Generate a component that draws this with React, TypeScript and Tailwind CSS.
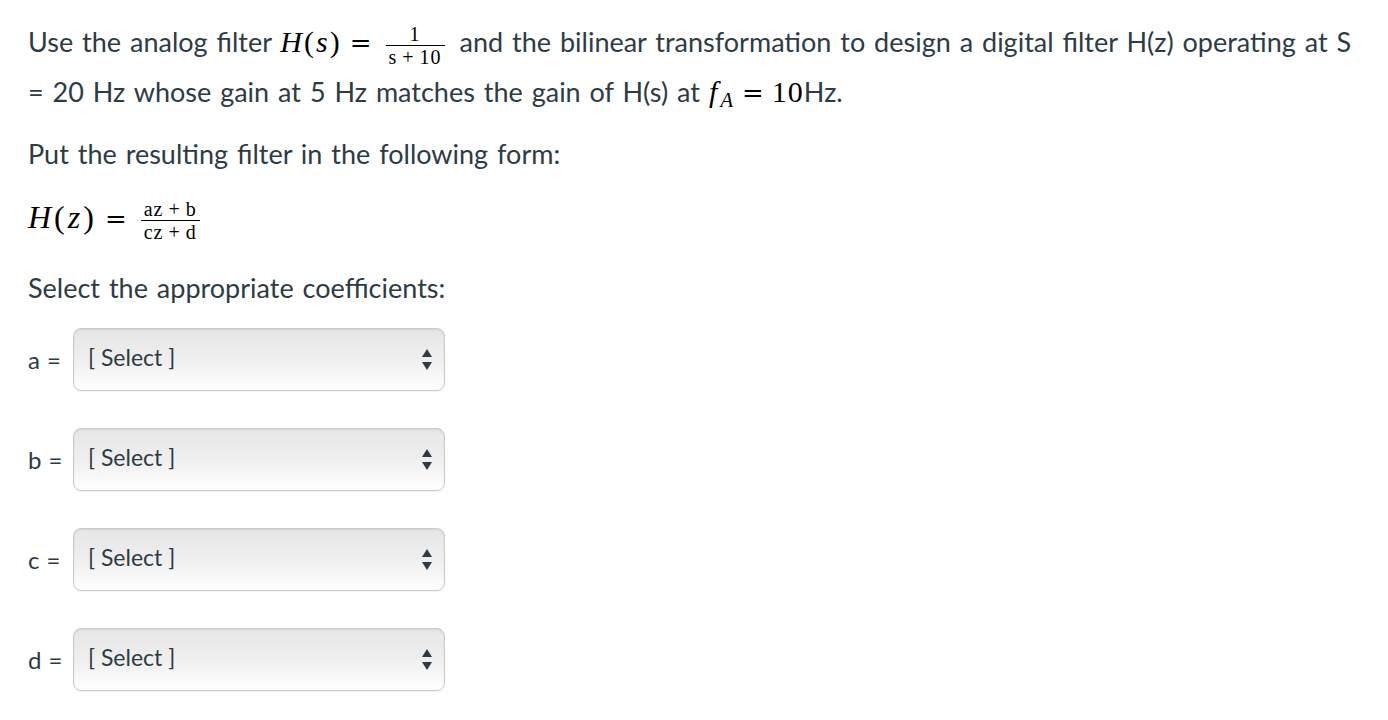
const textFont = { fontFamily: 'Lato, "Open Sans", sans-serif' };
const mathFont = { fontFamily: '"Liberation Serif", "DejaVu Serif", serif' };
const eqFont = { fontFamily: '"DejaVu Serif", "Liberation Serif", serif' };

function Frac({ num, den }: { num: string; den: string }) {
  return (
    <span className="inline-flex flex-col items-center align-middle mx-[6px] text-[20px] leading-[22px] tracking-[1px]">
      <span className="px-[3px]">{num}</span>
      <span className="w-full border-t border-black" />
      <span className="px-[3px]">{den}</span>
    </span>
  );
}

function Eq() {
  return (
    <span className="mx-[8px] text-[26px] tracking-normal" style={eqFont}>
      =
    </span>
  );
}

function SelectBox({ label }: { label: string }) {
  return (
    <div className="flex items-center h-[64px] [word-spacing:0]">
      <span className="w-[45px] text-[24px] tracking-[0.5px]">{label} =</span>
      <div className="flex items-center justify-between w-[372px] h-[63px] pl-[14px] pr-[12px] rounded-[8px] border border-[#c5cbcf] bg-gradient-to-b from-[#e6e6e6] via-[#efefef] to-white shadow-[inset_0_1px_2px_rgba(0,0,0,0.08),0_1px_1px_rgba(0,0,0,0.05)]">
        <span className="text-[23px] -mt-[4px]">[ Select ]</span>
        <span className="flex flex-col items-center gap-[5px]">
          <span className="w-0 h-0 border-l-[5px] border-r-[5px] border-b-[8px] border-l-transparent border-r-transparent border-b-[#2d3b45]" />
          <span className="w-0 h-0 border-l-[5px] border-r-[5px] border-t-[8px] border-l-transparent border-r-transparent border-t-[#2d3b45]" />
        </span>
      </div>
    </div>
  );
}

export default function App() {
  return (
    <main
      className="min-h-screen bg-white text-[#2d3b45] pl-[28px] pt-[18px] text-[27px] [word-spacing:2px]"
      style={textFont}
    >
      <p className="leading-[48px]">
        <span className="whitespace-nowrap">
          Use the analog filter{' '}
          <span className="text-black text-[30px] tracking-[2px] [word-spacing:0]" style={mathFont}>
            <i>H</i>(<i>s</i>)<Eq />
            <Frac num="1" den={'s\u2009+\u200910'} />
          </span>{' '}
          and the bilinear transformation to design a digital filter H(z) operating at S
        </span>
        <br />= 20 Hz whose gain at 5 Hz matches the gain of H(s) at{' '}
        <span className="text-black text-[30px] tracking-[1px] [word-spacing:0]" style={mathFont}>
          <i>f</i>
          <sub className="text-[21px] ml-[2px]">
            <i>A</i>
          </sub>
          <Eq />
          10
        </span>
        Hz.
      </p>

      <p className="mt-[13px] leading-[48px]">Put the resulting filter in the following form:</p>

      <div className="mt-[16px] h-[48px] flex items-center">
        <span className="text-black text-[32px] tracking-[3px] [word-spacing:0]" style={mathFont}>
          <i>H</i>(<i>z</i>)<Eq />
          <Frac num={'az\u2009+\u2009b'} den={'cz\u2009+\u2009d'} />
        </span>
      </div>

      <p className="mt-[22px] leading-[48px]">Select the appropriate coefficients:</p>

      <div className="mt-[16px] flex flex-col gap-[36px]">
        <SelectBox label="a" />
        <SelectBox label="b" />
        <SelectBox label="c" />
        <SelectBox label="d" />
      </div>
    </main>
  );
}
